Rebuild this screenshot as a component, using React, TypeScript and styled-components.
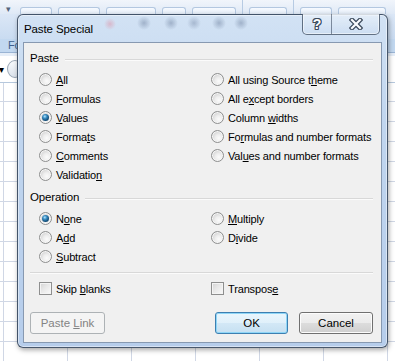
import React, { Fragment } from 'react'
import styled, { createGlobalStyle } from 'styled-components'

type Option = {
  label: string
  checked?: boolean
}

const pasteOptions: Array<Option> = [
  { label: '&All' },
  { label: '&Formulas' },
  { label: '&Values', checked: true },
  { label: 'Forma&ts' },
  { label: '&Comments' },
  { label: 'Validatio&n' },
  { label: 'All using Source t&heme' },
  { label: 'All e&xcept borders' },
  { label: 'Column &widths' },
  { label: 'Fo&rmulas and number formats' },
  { label: 'Val&ues and number formats' },
]

const operationOptions: Array<Option> = [
  { label: 'N&one', checked: true },
  { label: 'A&dd' },
  { label: '&Subtract' },
  { label: '&Multiply' },
  { label: 'D&ivide' },
]

// "&" marks the access key, as in a Windows resource file
function Mnemonic({ label }: { label: string }) {
  const at = label.indexOf('&')
  if (at < 0) return <span>{label}</span>
  return (
    <span>
      {label.slice(0, at)}
      <Key>{label[at + 1]}</Key>
      {label.slice(at + 2)}
    </span>
  )
}

function App() {
  return (
    <>
      <GlobalStyle />
      <Screen>
        <TopStrip>
          <StripArrow>▾</StripArrow>
          <RibbonButton $width={30} />
          <RibbonButton $width={40} />
          <RibbonButton $width={48} />
          <RibbonButton $width={22} />
          <RibbonButton $width={42} />
          <StripDivider />
          <RibbonButton $width={36} />
          <StripDivider />
          <RibbonButton $width={30} />
          <RibbonButton $width={46} />
        </TopStrip>
        <RibbonBody />
        <GroupLabelBar>Font</GroupLabelBar>
        <RibbonEdge />
        <FormulaBar>
          <NameBoxArrow>▾</NameBoxArrow>
          <FxButton />
        </FormulaBar>
        <Sheet />

        <Dialog>
          <TitleBar>
            <Title>Paste Special</Title>
            <CaptionButtons>
              <CaptionButton $width={28}>
                <HelpGlyph>?</HelpGlyph>
              </CaptionButton>
              <CaptionButton $width={47}>
                <svg width="14" height="12" viewBox="0 0 14 12">
                  <path d="M3 2 L11 10 M11 2 L3 10" stroke="#3d4b5d" strokeWidth="4.6" strokeLinecap="square" />
                  <path d="M3 2 L11 10 M11 2 L3 10" stroke="#fbfcfe" strokeWidth="2.2" strokeLinecap="square" />
                </svg>
              </CaptionButton>
            </CaptionButtons>
          </TitleBar>

          <Client>
            <GroupHeader>
              <GroupLabel>Paste</GroupLabel>
              <Rule />
            </GroupHeader>
            <OptionGrid $rows={6}>
              {pasteOptions.map(option => (
                <OptionRow key={option.label}>
                  <Radio $checked={option.checked} />
                  <Mnemonic label={option.label} />
                </OptionRow>
              ))}
            </OptionGrid>

            <GroupHeader $gap={6}>
              <GroupLabel>Operation</GroupLabel>
              <Rule />
            </GroupHeader>
            <OptionGrid $rows={3}>
              {operationOptions.map(option => (
                <OptionRow key={option.label}>
                  <Radio $checked={option.checked} />
                  <Mnemonic label={option.label} />
                </OptionRow>
              ))}
            </OptionGrid>

            <Separator />

            <OptionGrid $rows={1} $gap={5}>
              {['Skip &blanks', 'Transpos&e'].map(label => (
                <Fragment key={label}>
                  <OptionRow>
                    <CheckBox />
                    <Mnemonic label={label} />
                  </OptionRow>
                </Fragment>
              ))}
            </OptionGrid>

            <Footer>
              <Button disabled>
                <Mnemonic label="Paste &Link" />
              </Button>
              <Spacer />
              <Button $default $width={73}>OK</Button>
              <Button $width={74}>Cancel</Button>
            </Footer>
          </Client>
        </Dialog>
      </Screen>
    </>
  )
}

///////////////////////////////////////////////////////////////////////////////////

const GlobalStyle = createGlobalStyle`
  html, body {
    margin: 0;
    padding: 0;
    overflow: hidden;
    background: #ffffff;
  }
  body {
    font-family: 'Liberation Sans', Arial, sans-serif;
    font-size: 11px;
    letter-spacing: -0.15px;
  }
`

const Screen = styled.div`
  position: relative;
  width: 395px;
  height: 361px;
  overflow: hidden;
  display: flex;
  flex-direction: column;
  background: #ffffff;
`

const TopStrip = styled.div`
  height: 14px;
  flex: none;
  display: flex;
  align-items: flex-end;
  gap: 6px;
  padding-left: 2px;
  background: linear-gradient(#f1f5fb, #dfe9f6);
`

const StripArrow = styled.span`
  width: 12px;
  font-size: 9px;
  line-height: 10px;
  color: #56657a;
  text-align: center;
  align-self: flex-end;
`

const RibbonButton = styled.span<{ $width: number }>`
  width: ${p => p.$width}px;
  height: 6px;
  border: 1px solid #b3c7e0;
  border-bottom: none;
  border-radius: 3px 3px 0 0;
  background: linear-gradient(#f7faff, #e4edf8);
`

const StripDivider = styled.span`
  width: 1px;
  height: 14px;
  background: #b7cbe3;
`

const RibbonBody = styled.div`
  height: 25px;
  flex: none;
  background: linear-gradient(#dbe7f6, #c9dbf1);
`

const GroupLabelBar = styled.div`
  height: 13px;
  flex: none;
  padding-left: 8px;
  font-size: 11px;
  line-height: 13px;
  color: #3e5f8c;
  background: #c2d8f0;
`

const RibbonEdge = styled.div`
  height: 3px;
  flex: none;
  background: #e6eef8;
  border-top: 1px solid #9ab4d4;
`

const FormulaBar = styled.div`
  height: 26px;
  flex: none;
  display: flex;
  align-items: center;
  gap: 3px;
  background: #ffffff;
  border-bottom: 1px solid #b6c8dd;
`

const NameBoxArrow = styled.span`
  font-size: 10px;
  color: #000000;
  margin-left: -1px;
`

const FxButton = styled.span`
  width: 14px;
  height: 16px;
  border-radius: 50%;
  border: 1px solid #9aa7b6;
  background: linear-gradient(#f9fbfd, #dce3ec);
`

const Sheet = styled.div`
  flex: 1;
  background-color: #ffffff;
  background-image: linear-gradient(to right, #d0d7e5 1px, transparent 1px),
    linear-gradient(to bottom, #d0d7e5 1px, transparent 1px);
  background-size: 64px 20px;
  background-position: 3px 18px;
`

const Dialog = styled.div`
  position: absolute;
  left: 17px;
  top: 14px;
  width: 371px;
  height: 334px;
  box-sizing: border-box;
  display: flex;
  flex-direction: column;
  border: 1px solid rgba(38, 52, 72, 0.8);
  border-radius: 6px;
  background:
    radial-gradient(circle at 126px 8px, rgba(70, 90, 125, 0.35), transparent 7px),
    radial-gradient(circle at 153px 8px, rgba(70, 90, 125, 0.35), transparent 7px),
    radial-gradient(circle at 176px 8px, rgba(70, 90, 125, 0.3), transparent 7px),
    radial-gradient(circle at 201px 8px, rgba(70, 90, 125, 0.35), transparent 7px),
    radial-gradient(circle at 223px 8px, rgba(70, 90, 125, 0.35), transparent 7px),
    radial-gradient(circle at 92px 9px, rgba(230, 110, 130, 0.35), transparent 6px),
    linear-gradient(180deg, #d2e2f4 0%, #c1d6ef 30%, #b6cdeb 100%);
  box-shadow: 1px 2px 5px rgba(0, 0, 0, 0.35), inset 0 0 0 1px rgba(255, 255, 255, 0.45);
`

const TitleBar = styled.div`
  height: 27px;
  flex: none;
  display: flex;
  justify-content: space-between;
  align-items: flex-start;
  padding: 0 7px 0 6px;
`

const Title = styled.div`
  font-size: 11.5px;
  letter-spacing: -0.1px;
  line-height: 28px;
  color: #000000;
`

const CaptionButtons = styled.div`
  display: flex;
  margin-top: -1px;
  height: 20px;
  border: 1px solid rgba(45, 60, 82, 0.7);
  border-top: none;
  border-radius: 0 0 5px 5px;
  overflow: hidden;
  background: linear-gradient(rgba(240, 246, 252, 0.6), rgba(200, 218, 240, 0.35));
  box-shadow: inset 0 0 0 1px rgba(255, 255, 255, 0.5);
`

const CaptionButton = styled.div<{ $width: number }>`
  width: ${p => p.$width}px;
  display: flex;
  align-items: center;
  justify-content: center;
  & + & {
    border-left: 1px solid rgba(45, 60, 82, 0.55);
  }
`

const HelpGlyph = styled.span`
  font-weight: bold;
  font-size: 14px;
  line-height: 14px;
  letter-spacing: 0;
  color: #fbfcfe;
  text-shadow: 1px 0 0 #3d4b5d, -1px 0 0 #3d4b5d, 0 1px 0 #3d4b5d, 0 -1px 0 #3d4b5d,
    1px 1px 0 #3d4b5d, -1px -1px 0 #3d4b5d, 1px -1px 0 #3d4b5d, -1px 1px 0 #3d4b5d;
`

const Client = styled.div`
  flex: 1;
  margin: 0 5px 4px;
  display: flex;
  flex-direction: column;
  padding: 8px 8px 0 6px;
  border: 1px solid #8799b1;
  background: #f0f0f0;
  color: #000000;
`

const GroupHeader = styled.div<{ $gap?: number }>`
  height: 15px;
  display: flex;
  align-items: center;
  gap: 6px;
  margin-top: ${p => p.$gap ?? 0}px;
`

const GroupLabel = styled.span`
  font-size: 11.5px;
  line-height: 15px;
`

const Rule = styled.span`
  flex: 1;
  height: 0;
  margin-top: 2px;
  border-top: 1px solid #d8d8d8;
  border-bottom: 1px solid #fbfbfb;
`

const OptionGrid = styled.div<{ $rows: number; $gap?: number }>`
  display: grid;
  grid-template-columns: 172px 1fr;
  grid-template-rows: repeat(${p => p.$rows}, 19px);
  grid-auto-flow: column;
  padding-left: 9px;
  margin-top: ${p => p.$gap ?? 4}px;
`

const OptionRow = styled.label`
  display: flex;
  align-items: center;
  gap: 4px;
  white-space: nowrap;
`

const Key = styled.u`
  text-decoration: underline;
  text-underline-offset: 1px;
`

const Radio = styled.span<{ $checked?: boolean }>`
  flex: none;
  width: 13px;
  height: 13px;
  box-sizing: border-box;
  border-radius: 50%;
  border: 1px solid #8e8f8f;
  background: radial-gradient(circle at 62% 65%, #fbfbfb 0, #eeeeee 35%, #d2d2d2 75%);
  box-shadow: inset 0 0 0 1px #f6f6f6;
  display: flex;
  align-items: center;
  justify-content: center;

  &::after {
    content: '';
    display: ${p => (p.$checked ? 'block' : 'none')};
    width: 7px;
    height: 7px;
    border-radius: 50%;
    background: radial-gradient(circle at 40% 35%, #b6e6ff 0, #3b8fc4 30%, #14507c 65%, #0c3658 100%);
  }
`

const CheckBox = styled.span`
  flex: none;
  width: 13px;
  height: 13px;
  box-sizing: border-box;
  border: 1px solid #8e8f8f;
  background: linear-gradient(135deg, #d3d3d3 0%, #e8e8e8 45%, #fafafa 100%);
  box-shadow: inset 0 0 0 1px #f4f4f4;
`

const Separator = styled.div`
  margin-top: 6px;
  border-top: 1px solid #d8d8d8;
  border-bottom: 1px solid #fbfbfb;
`

const Footer = styled.div`
  margin-top: 14px;
  display: flex;
  align-items: center;
  gap: 11px;
`

const Spacer = styled.span`
  flex: 1;
`

const Button = styled.button<{ $default?: boolean; $width?: number }>`
  width: ${p => p.$width ?? 75}px;
  height: 22px;
  padding: 0;
  font-family: 'Liberation Sans', Arial, sans-serif;
  font-size: 11.5px;
  color: #000000;
  border: 1px solid ${p => (p.$default ? '#3c7fb1' : '#707070')};
  border-radius: 3px;
  background: ${p =>
    p.$default
      ? 'linear-gradient(#eaf6fd 0%, #e0f0fa 50%, #d3e8f6 50%, #c6e0f2 100%)'
      : 'linear-gradient(#f2f2f2 0%, #ebebeb 50%, #dddddd 50%, #cfcfcf 100%)'};
  box-shadow: inset 0 0 0 1px ${p => (p.$default ? '#8fd6f7' : '#fcfcfc')};

  &:disabled {
    border-color: #adb2b5;
    background: #f4f4f4;
    box-shadow: none;
    color: #838383;
  }
`

export default App
